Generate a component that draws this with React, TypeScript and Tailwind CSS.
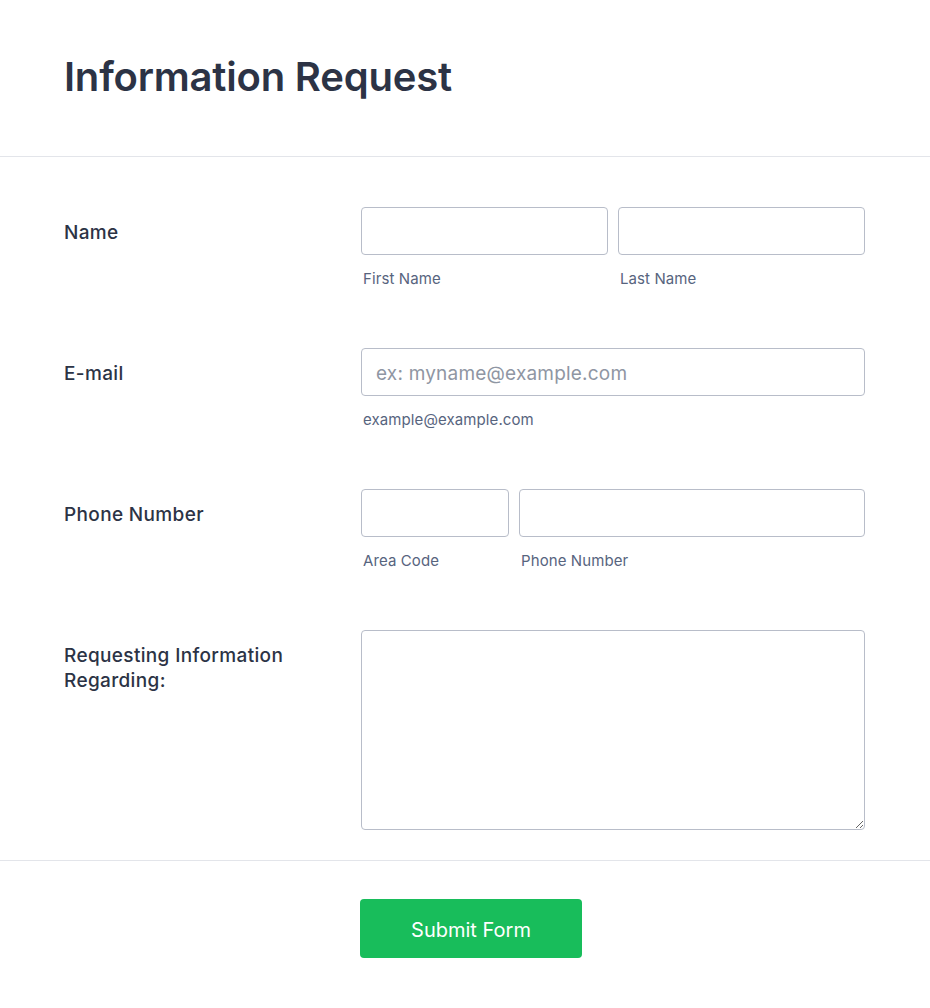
const inputCls =
  "h-[48px] w-full rounded-[4px] border border-[#b8bdc9] bg-white px-[14px] pt-[2px] text-[19px] tracking-[0.2px] text-[#2c3345] outline-none placeholder:text-[#8f96a3]";

function SubLabel({ children }: { children: string }) {
  return (
    <span className="mt-[14px] ml-[2px] block text-[15px] leading-[20px] tracking-[0.1px] text-[#57647e]">
      {children}
    </span>
  );
}

function Row({ label, children }: { label: string; children: React.ReactNode }) {
  return (
    <div className="flex">
      <label className="w-[297px] shrink-0 pt-[13px] pr-[10px] text-[19px] leading-[25px] font-medium tracking-[0.35px] text-[#2c3345]">
        {label}
      </label>
      <div className="flex-1">{children}</div>
    </div>
  );
}

export default function App() {
  return (
    <div className="min-h-[1008px] w-[930px] bg-white font-['Inter',sans-serif]">
      <div className="h-[157px] border-b border-[#e3e5ea] px-[64px] pt-[52px]">
        <h1 className="text-[40px] leading-[50px] font-semibold tracking-[-0.2px] text-[#2c3345]">
          Information Request
        </h1>
      </div>

      <form className="flex flex-col gap-[59px] pt-[50px] pr-[65px] pb-[30px] pl-[64px]">
        <Row label="Name">
          <div className="flex gap-[10px]">
            <div className="flex-1">
              <input className={inputCls} />
              <SubLabel>First Name</SubLabel>
            </div>
            <div className="flex-1">
              <input className={inputCls} />
              <SubLabel>Last Name</SubLabel>
            </div>
          </div>
        </Row>

        <Row label="E-mail">
          <input className={inputCls} placeholder="ex: myname@example.com" />
          <SubLabel>example@example.com</SubLabel>
        </Row>

        <Row label="Phone Number">
          <div className="flex gap-[10px]">
            <div className="w-[148px] shrink-0">
              <input className={inputCls} />
              <SubLabel>Area Code</SubLabel>
            </div>
            <div className="flex-1">
              <input className={inputCls} />
              <SubLabel>Phone Number</SubLabel>
            </div>
          </div>
        </Row>

        <Row label="Requesting Information Regarding:">
          <textarea className="block h-[200px] w-full rounded-[4px] border border-[#b8bdc9] bg-white p-[14px] text-[18px] text-[#2c3345] outline-none" />
        </Row>
      </form>

      <div className="flex justify-center border-t border-[#e3e5ea] pt-[38px] pb-[50px] pl-[12px]">
        <button
          type="button"
          className="h-[59px] w-[222px] rounded-[4px] bg-[#18bd5b] pt-[2px] text-[20px] font-normal text-white"
        >
          Submit Form
        </button>
      </div>
    </div>
  );
}
